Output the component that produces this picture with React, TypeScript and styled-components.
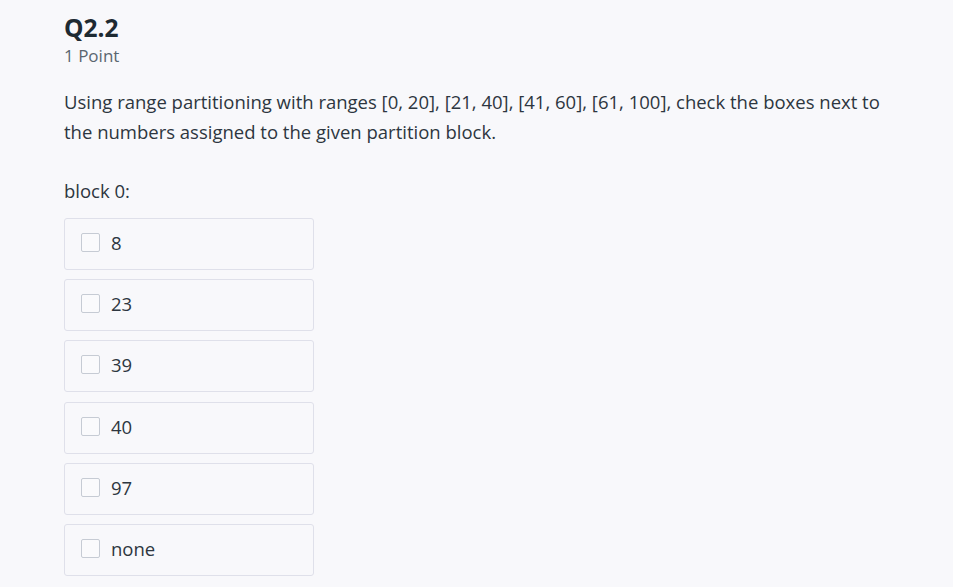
import React from 'react';
import styled, { createGlobalStyle } from 'styled-components';

const GlobalStyle = createGlobalStyle`
  html, body {
    margin: 0;
    padding: 0;
    background: #f8f8fb;
  }
  body {
    font-family: "Open Sans", Lato, sans-serif;
    color: #2d3640;
  }
`;

const Page = styled.div`
  padding: 13px 64px 0;
  width: 953px;
  height: 587px;
  box-sizing: border-box;
  overflow: hidden;
`;

const Title = styled.h2`
  margin: 0;
  font-size: 24.5px;
  font-weight: 700;
  line-height: 30px;
  color: #1e2a32;
`;

const Points = styled.div`
  font-size: 17px;
  line-height: 24px;
  margin-top: 1px;
  color: #5b6670;
`;

const Prompt = styled.p`
  margin: 19px 0 0;
  font-size: 18.5px;
  line-height: 30px;
  color: #2d3640;
`;

const BlockLabel = styled.p`
  margin: 32px 0 15px;
  font-size: 18.5px;
  line-height: 24px;
`;

const Options = styled.div`
  display: flex;
  flex-direction: column;
  gap: 9.2px;
`;

const Option = styled.label`
  display: flex;
  align-items: center;
  gap: 11px;
  width: 250px;
  height: 52px;
  box-sizing: border-box;
  padding: 0 16px 3px;
  border: 1px solid #dfe0ea;
  border-radius: 3px;
  background: #f8f8fb;
  font-size: 18.5px;
  cursor: pointer;
`;

const Box = styled.span`
  width: 19px;
  height: 19px;
  box-sizing: border-box;
  border: 1px solid #c6cbd4;
  border-radius: 2px;
  background: #fafafc;
  flex-shrink: 0;
`;

const values = ['8', '23', '39', '40', '97', 'none'];

export default function App() {
  return (
    <Page>
      <GlobalStyle />
      <Title>Q2.2</Title>
      <Points>1 Point</Points>
      <Prompt>
        Using range partitioning with ranges [0, 20], [21, 40], [41, 60], [61, 100], check the boxes next to
        <br />
        the numbers assigned to the given partition block.
      </Prompt>
      <BlockLabel>block 0:</BlockLabel>
      <Options>
        {values.map((v) => (
          <Option key={v}>
            <Box />
            {v}
          </Option>
        ))}
      </Options>
    </Page>
  );
}
